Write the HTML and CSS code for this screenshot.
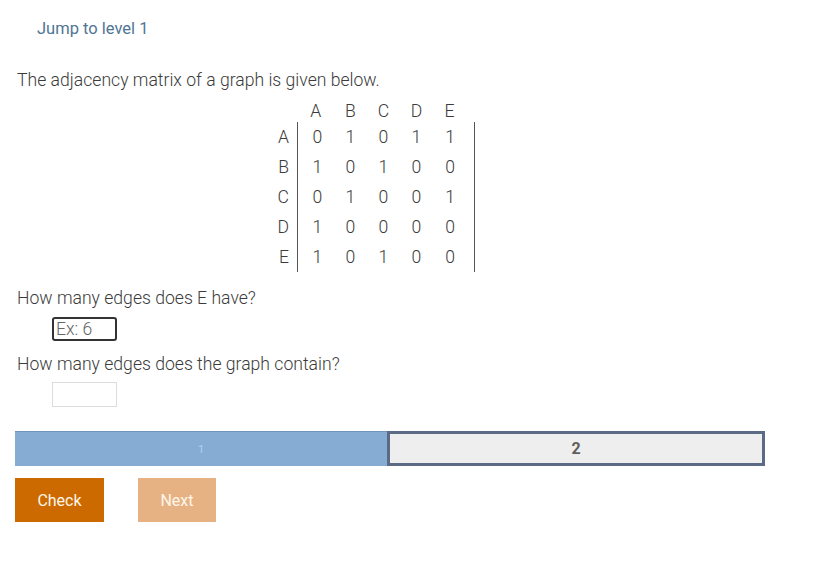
FILE: index.html
```html
<!DOCTYPE html>
<html>
<head>
<meta charset="utf-8">
<link rel="stylesheet" href="styles.css">
</head>
<body>
<div class="page">
  <div class="jump">Jump to level 1</div>
  <p class="intro">The adjacency matrix of a graph is given below.</p>
  <table class="matrix">
    <thead>
      <tr><th></th><th>A</th><th>B</th><th>C</th><th>D</th><th class="hlast">E</th></tr>
    </thead>
    <tbody>
      <tr><th>A</th><td class="first">0</td><td>1</td><td>0</td><td>1</td><td class="last">1</td></tr>
      <tr><th>B</th><td class="first">1</td><td>0</td><td>1</td><td>0</td><td class="last">0</td></tr>
      <tr><th>C</th><td class="first">0</td><td>1</td><td>0</td><td>0</td><td class="last">1</td></tr>
      <tr><th>D</th><td class="first">1</td><td>0</td><td>0</td><td>0</td><td class="last">0</td></tr>
      <tr><th>E</th><td class="first">1</td><td>0</td><td>1</td><td>0</td><td class="last">0</td></tr>
    </tbody>
  </table>
  <p class="question">How many edges does E have?</p>
  <div class="answer"><input class="box box-active" type="text" placeholder="Ex: 6"></div>
  <p class="question q2">How many edges does the graph contain?</p>
  <div class="answer"><input class="box box-plain" type="text"></div>
  <div class="levels">
    <div class="level level-done">1</div>
    <div class="level level-current">2</div>
  </div>
  <div class="actions">
    <button class="btn btn-check">Check</button>
    <button class="btn btn-next">Next</button>
  </div>
</div>
</body>
</html>
```
FILE: styles.css
```css
html, body {
  margin: 0;
  padding: 0;
  background: #ffffff;
}
body {
  font-family: Roboto, "Liberation Sans", sans-serif;
  color: #3b3b3b;
}
.page {
  padding: 0 55px 0 15px;
}
.jump {
  margin: 19px 0 0 22px;
  font-size: 16.5px;
  line-height: 20px;
  color: #4f7594;
}
.intro {
  margin: 29px 0 0 2px;
  font-size: 17.6px;
  font-weight: 300;
  line-height: 24px;
}
.matrix {
  margin: 8px 0 0 250px;
  border-collapse: collapse;
  font-size: 17.6px;
  font-weight: 300;
}
.matrix th, .matrix td {
  padding: 0;
  font-weight: 300;
  text-align: center;
}
.matrix thead th {
  height: 22px;
  width: 33px;
  vertical-align: middle;
}
.matrix thead th:first-child {
  width: 24px;
}
.matrix thead th.hlast {
  padding-right: 8px;
}
.matrix tbody th {
  height: 30px;
  width: 24px;
  text-align: right;
  padding-right: 8px;
}
.matrix td {
  width: 33px;
  height: 30px;
}
.matrix td.first {
  border-left: 1.5px solid #555;
  padding-left: 3px;
}
.matrix td.last {
  border-right: 1.5px solid #555;
  padding-right: 6px;
}
.question {
  margin: 14px 0 0 2px;
  font-size: 17.6px;
  font-weight: 300;
  line-height: 24px;
}
.q2 {
  margin-top: 11px;
}
.answer {
  margin: 7px 0 0 37px;
  height: 24px;
}
.box {
  display: block;
  box-sizing: border-box;
  width: 65px;
  height: 24px;
  margin: 0;
  padding: 0 2px;
  font-family: Roboto, "Liberation Sans", sans-serif;
  font-size: 17.6px;
  font-weight: 300;
  color: #333;
  background: #fff;
  outline: none;
}
.box::placeholder {
  color: #666;
}
.box-active {
  border: 2px solid #333;
  border-radius: 3px;
}
.box-plain {
  border: 1px solid #dcdcdc;
  height: 25px;
}
.q2 + .answer {
  margin-top: 6px;
  height: 25px;
}
.levels {
  display: flex;
  margin-top: 24px;
  height: 35px;
}
.level {
  flex: 1;
  box-sizing: border-box;
  display: flex;
  align-items: center;
  justify-content: center;
}
.level-done {
  background: #87acd4;
  border-top: 1px solid #7296bb;
  color: #b4cfea;
  font-size: 11px;
}
.level-current {
  background: #eeeeee;
  border: 3px solid #5b6b86;
  color: #5f5f5f;
  font-size: 16px;
  font-weight: 700;
}
.actions {
  display: flex;
  gap: 34px;
  margin-top: 12px;
}
.btn {
  height: 44px;
  border: none;
  margin: 0;
  padding: 0;
  font-family: Roboto, "Liberation Sans", sans-serif;
  font-size: 16px;
  color: #fff6ea;
}
.btn-check {
  width: 89px;
  background: #cc6a00;
}
.btn-next {
  width: 78px;
  background: #e6b283;
}
```
